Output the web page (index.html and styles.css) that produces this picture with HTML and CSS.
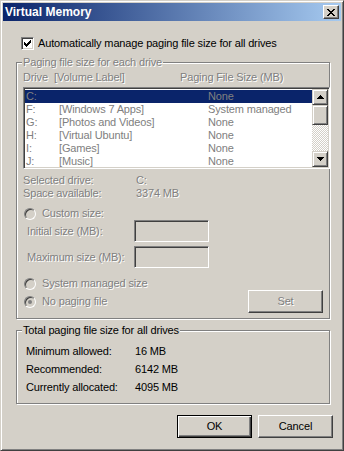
FILE: index.html
```html
<!DOCTYPE html>
<html>
<head>
<meta charset="utf-8">
<title>Virtual Memory</title>
<link rel="stylesheet" href="styles.css">
</head>
<body>
<div class="window">
  <div class="titlebar">
    <span class="title">Virtual Memory</span>
    <span class="close"><svg width="8" height="7" viewBox="0 0 8 7" shape-rendering="crispEdges"><path fill="#000" d="M0 0h2v1H0zM6 0h2v1H6zM1 1h2v1H1zM5 1h2v1H5zM2 2h4v1H2zM3 3h2v1H3zM2 4h4v1H2zM1 5h2v1H1zM5 5h2v1H5zM0 6h2v1H0zM6 6h2v1H6z"/></svg></span>
  </div>
  <div class="client">
    <div class="check-row">
      <span class="checkbox"><svg width="7" height="7" viewBox="0 0 7 7" shape-rendering="crispEdges"><path fill="#000" d="M0 2h1v3H0zM1 3h1v3H1zM2 4h1v3H2zM3 3h1v3H3zM4 2h1v3H4zM5 1h1v3H5zM6 0h1v3H6z"/></svg></span>
      <span>Automatically manage paging file size for all drives</span>
    </div>

    <div class="group g1">
      <div class="legend dis">Paging file size for each drive</div>
      <div class="list-head dis"><span>Drive</span><span>[Volume Label]</span><span>Paging File Size (MB)</span></div>
      <div class="listbox">
        <div class="rows">
          <div class="row sel"><span>C:</span><span></span><span>None</span></div>
          <div class="row"><span>F:</span><span>[Windows 7 Apps]</span><span>System managed</span></div>
          <div class="row"><span>G:</span><span>[Photos and Videos]</span><span>None</span></div>
          <div class="row"><span>H:</span><span>[Virtual Ubuntu]</span><span>None</span></div>
          <div class="row"><span>I:</span><span>[Games]</span><span>None</span></div>
          <div class="row"><span>J:</span><span>[Music]</span><span>None</span></div>
        </div>
        <div class="vscroll">
          <span class="sbtn"><svg width="7" height="4" viewBox="0 0 7 4" shape-rendering="crispEdges"><path fill="#000" d="M3 0h1v1H3zM2 1h3v1H2zM1 2h5v1H1zM0 3h7v1H0z"/></svg></span>
          <span class="thumb"></span>
          <span class="track"></span>
          <span class="sbtn"><svg width="7" height="4" viewBox="0 0 7 4" shape-rendering="crispEdges"><path fill="#000" d="M0 0h7v1H0zM1 1h5v1H1zM2 2h3v1H2zM3 3h1v1H3z"/></svg></span>
        </div>
      </div>

      <div class="info dis">
        <span>Selected drive:</span><span>C:</span>
        <span>Space available:</span><span>3374 MB</span>
      </div>

      <div class="radio-row custom dis"><span class="radio"></span><span>Custom size:</span></div>
      <div class="field-row dis"><span class="flabel">Initial size (MB):</span><span class="textbox"></span></div>
      <div class="field-row second dis"><span class="flabel">Maximum size (MB):</span><span class="textbox"></span></div>
      <div class="radio-row system dis"><span class="radio"></span><span>System managed size</span></div>
      <div class="nopaging-row">
        <div class="radio-row dis"><span class="radio checked"></span><span>No paging file</span></div>
        <span class="btn set dis">Set</span>
      </div>
    </div>

    <div class="group g2">
      <div class="legend">Total paging file size for all drives</div>
      <div class="totals">
        <span>Minimum allowed:</span><span>16 MB</span>
        <span>Recommended:</span><span>6142 MB</span>
        <span>Currently allocated:</span><span>4095 MB</span>
      </div>
    </div>

    <div class="buttons">
      <span class="btn default">OK</span>
      <span class="btn">Cancel</span>
    </div>
  </div>
</div>
</body>
</html>
```
FILE: styles.css
```css
* { box-sizing: border-box; margin: 0; padding: 0; }
html, body { width: 344px; height: 451px; overflow: hidden; background: #D4D0C8; }
body {
  font-family: "Liberation Sans", Arial, sans-serif;
  font-size: 11px;
  line-height: 13px;
  letter-spacing: -0.15px;
  color: #000;
}
.window {
  width: 344px; height: 451px;
  border: 1px solid; border-color: #D4D0C8 #404040 #404040 #D4D0C8;
  box-shadow: inset 1px 1px #fff, inset -1px -1px #808080;
  padding: 2px;
  display: flex; flex-direction: column;
}
.titlebar {
  height: 18px; flex: none;
  display: flex; align-items: center; justify-content: space-between;
  padding: 0 2px;
  background: linear-gradient(to right, #0A246A, #A6CAF0);
}
.title { color: #fff; font-weight: bold; font-size: 12px; letter-spacing: 0; line-height: 18px; }
.close {
  width: 16px; height: 14px;
  display: flex; align-items: center; justify-content: center;
  background: #D4D0C8;
  border: 1px solid; border-color: #fff #404040 #404040 #fff;
  box-shadow: inset -1px -1px #808080;
}
.close svg { display: block; }
.client {
  flex: 1;
  padding: 16px 11px 0 13px;
  display: flex; flex-direction: column;
}
.check-row { display: flex; align-items: center; gap: 4px; height: 13px; margin-left: 5px; }
.checkbox {
  width: 13px; height: 13px; flex: none;
  display: flex; align-items: center; justify-content: center;
  background: #fff;
  border: 1px solid; border-color: #808080 #fff #fff #808080;
  box-shadow: inset 1px 1px #404040, inset -1px -1px #D4D0C8;
}
.checkbox svg { display: block; }
.dis { color: #808080; text-shadow: 1px 1px 0 #fff; }
.group {
  border: 1px solid #808080;
  box-shadow: inset 1px 1px #fff, 1px 1px #fff;
  display: flex; flex-direction: column;
  padding: 0 0 0 6px;
}
.legend {
  align-self: flex-start;
  margin: -7px 0 0 -1px;
  padding: 0 1px;
  background: #D4D0C8;
  height: 13px;
}
.g1 { margin-top: 12px; padding-bottom: 5px; }
.list-head { display: grid; grid-template-columns: 31px 126px auto; margin-top: 2px; height: 13px; }
.listbox {
  margin: 3px -1px 0 0;
  height: 82px;
  display: flex;
  padding: 1px;
  background: #fff;
  border: 1px solid; border-color: #808080 #fff #fff #808080;
  box-shadow: inset 1px 1px #404040, inset -1px -1px #D4D0C8;
}
.rows { flex: 1; overflow: hidden; padding-top: 1px; }
.row {
  height: 13px;
  display: grid; grid-template-columns: 33px 149px auto;
  padding-left: 1px;
  color: #808080;
  white-space: nowrap;
}
.row.sel { background: #0A246A; }
.vscroll { width: 16px; flex: none; display: flex; flex-direction: column; }
.sbtn, .thumb {
  display: flex; align-items: center; justify-content: center;
  background: #D4D0C8;
  border: 1px solid; border-color: #D4D0C8 #404040 #404040 #D4D0C8;
  box-shadow: inset 1px 1px #fff, inset -1px -1px #808080;
}
.sbtn { height: 16px; flex: none; }
.sbtn svg { display: block; }
.thumb { height: 20px; flex: none; }
.track {
  flex: 1;
  background: repeating-conic-gradient(#fff 0 25%, #D4D0C8 0 50%) 0 0 / 2px 2px;
}
.info { display: grid; grid-template-columns: 113px auto; margin-top: 5px; }
.radio-row { display: flex; align-items: center; height: 13px; gap: 6px; }
.radio-row .radio { margin-left: 1px; }
.custom { margin-top: 7px; }
.system { margin-top: 9px; }
.radio {
  width: 12px; height: 12px; flex: none;
  border-radius: 50%;
  position: relative;
  background: #D4D0C8;
  border: 1px solid; border-color: #808080 #fff #fff #808080;
  box-shadow: inset 1px 1px #404040, inset -1px -1px #D4D0C8;
}
.radio.checked::after {
  content: ""; position: absolute; left: 3px; top: 3px;
  width: 4px; height: 4px; border-radius: 50%; background: #808080;
}
.field-row { display: flex; align-items: center; height: 22px; }
.field-row.second { margin-top: 4px; }
.flabel { width: 111px; padding-left: 4px; flex: none; }
.textbox {
  width: 75px; height: 22px;
  background: #D4D0C8;
  border: 1px solid; border-color: #808080 #fff #fff #808080;
  box-shadow: inset 1px 1px #404040, inset -1px -1px #D4D0C8;
}
.nopaging-row { display: flex; align-items: center; justify-content: space-between; height: 23px; padding-right: 6px; }
.btn {
  width: 75px; height: 23px;
  display: flex; align-items: center; justify-content: center;
  background: #D4D0C8;
  border: 1px solid; border-color: #fff #404040 #404040 #fff;
  box-shadow: inset -1px -1px #808080;
}
.btn.default {
  border: 1px solid #000;
  box-shadow: inset 1px 1px #fff, inset -1px -1px #404040, inset -2px -2px #808080;
}
.g2 { margin-top: 11px; padding-bottom: 7px; }
.totals {
  display: grid; grid-template-columns: 109px auto;
  grid-auto-rows: 18px; align-items: center;
  margin: 5px 0 0 3px;
}
.buttons { display: flex; justify-content: flex-end; gap: 6px; margin: 11px -3px 0 0; }
```
